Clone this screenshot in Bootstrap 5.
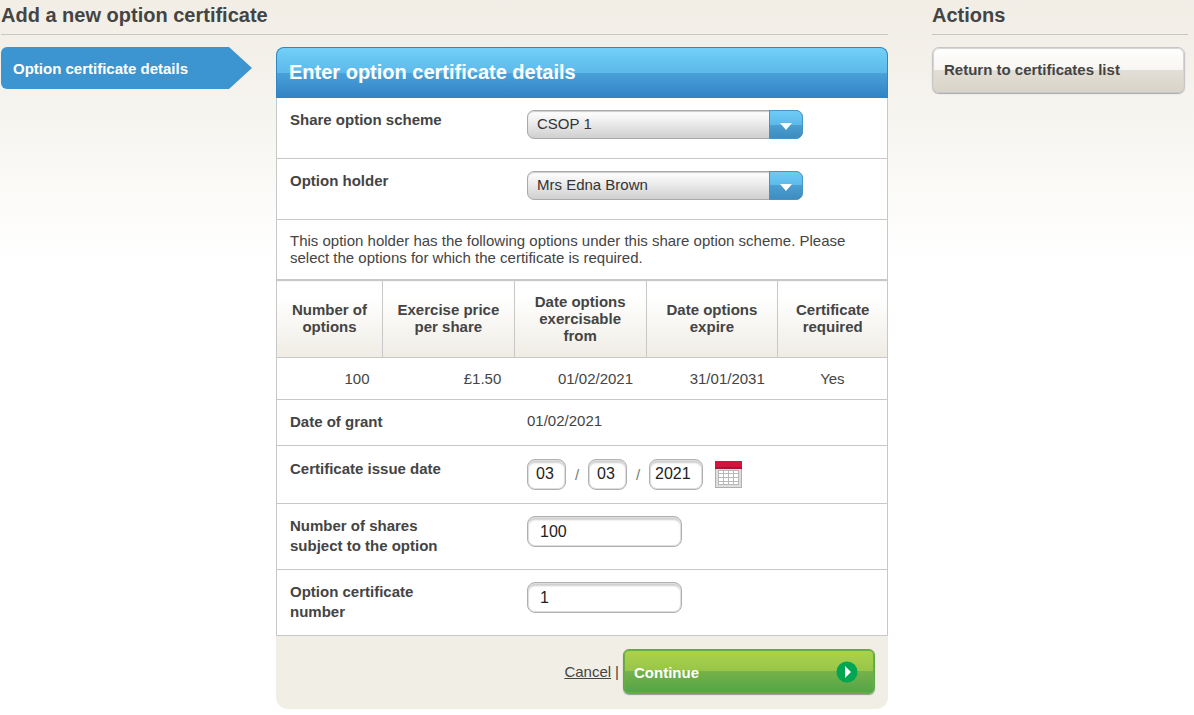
<!DOCTYPE html>
<html lang="en">
<head>
<meta charset="utf-8">
<meta name="viewport" content="width=device-width, initial-scale=1">
<title>Add a new option certificate</title>
<link rel="stylesheet" href="https://cdn.jsdelivr.net/npm/bootstrap@5.3.0/dist/css/bootstrap.min.css">
<style>
  body {
    font-family: "Liberation Sans", Arial, sans-serif;
    font-size: 15px;
    line-height: 17px;
    color: #444;
    background: #fff linear-gradient(#f2eee6, #f3f0e9 50px, #fff 260px) no-repeat;
  }
  .page-title {
    font-size: 20px;
    line-height: 24px;
    font-weight: 700;
    padding: 3px 0 7px;
    margin: 0 0 12px;
    border-bottom: 1px solid #c9c7c0;
  }
  .page-wrap { padding: 0 6px 0 1px; gap: 44px; }
  .steps-col { width: 275px; }
  .actions-col { width: 256px; }
  .step-current {
    width: 251px;
    height: 42px;
    padding: 0 12px;
    background: #3c95d0;
    color: #fff;
    font-weight: 700;
    border-radius: 6px 0 0 6px;
    clip-path: polygon(0 0, 228px 0, 100% 50%, 228px 100%, 0 100%);
  }
  .panel-head {
    height: 51px;
    padding: 0 12px 2px;
    font-size: 20px;
    font-weight: 700;
    color: #fff;
    border: 1px solid #3384c4;
    border-bottom: 0;
    border-radius: 8px 8px 0 0;
    background: linear-gradient(#72d0f8, #5cb9ea 49%, #4aa2da 49%, #3182c3);
  }
  .panel-body { border: solid #c8c8c8; border-width: 0 1px; background: #fff; }
  .form-line { padding: 12px 13px; border-bottom: 1px solid #c8c8c8; }
  .form-line > label, .form-line > .caption {
    width: 237px;
    padding-right: 80px;
    line-height: 20px;
    font-weight: 700;
    flex-shrink: 0;
  }
  .line-select { min-height: 61px; }
  .line-grant { min-height: 46px; }
  .line-date { min-height: 58px; }
  .line-date > label { padding-top: 1px; }
  .line-number { min-height: 66px; }
  .intro { padding: 12px 13px 13px; border-bottom: 1px solid #c8c8c8; }

  .scheme-select {
    width: 276px;
    height: 29px;
    padding: 0 44px 2px 9px;
    font-size: 15px;
    line-height: 17px;
    color: #333;
    border: 1px solid #aaa;
    border-radius: 7px;
    box-shadow: inset 0 1px 1px #ccc;
    background: linear-gradient(#fff, #f0f0f0 35%, #cfcfcf);
  }
  .select-cap {
    right: 0;
    width: 34px;
    height: 29px;
    border: 1px solid #4794c6;
    border-radius: 0 7px 7px 0;
    background: linear-gradient(#6fcbf6, #5db9e8 50%, #4b9fd1 50%, #3e8cc0);
    pointer-events: none;
  }

  .options-table { table-layout: fixed; color: inherit; border-top: 1px solid #c8c8c8; }
  .options-table th {
    height: 77px;
    padding: 0 12px 2px;
    text-align: center;
    vertical-align: middle;
    border-bottom: 1px solid #c8c8c8;
    background: linear-gradient(#fff 20%, #efece4);
  }
  .options-table th + th { border-left: 1px solid #c8c8c8; }
  .options-table td {
    height: 42px;
    padding: 0 13px;
    text-align: right;
    vertical-align: middle;
    border-bottom: 1px solid #c8c8c8;
  }

  .text-field {
    height: 31px;
    font-size: 16px;
    line-height: 18px;
    color: #222;
    border: 1px solid #b0b0b0;
    border-radius: 8px;
    box-shadow: inset 0 0 0 1px #dedede, inset 0 3px 2px #cfcfcf;
    padding: 0 5px 2px;
  }
  .field-day { width: 39px; padding: 0 8px 2px; }
  .field-year { width: 54px; }
  .field-number { width: 155px; padding: 0 12px; }
  .line-date .btn { margin-left: 12px; }
  .date-slash { width: 22px; text-align: center; color: #777; }

  .panel-foot {
    padding: 13px;
    background: #f1eee6;
    border-radius: 0 0 12px 12px;
    min-height: 73px;
  }
  .cancel-link { color: #444; }
  .btn-continue {
    width: 252px;
    height: 45px;
    padding: 0 16px 0 10px;
    font-size: 15px;
    font-weight: 700;
    color: #fff;
    border: 1px solid #5faa48;
    border-radius: 6px;
    box-shadow: inset 0 0 0 1px #69ad47, 0 1px 1px #999;
    background: linear-gradient(#add24a, #97c549 50%, #76b14a 50%, #52a548);
  }
  .btn-continue > span { padding-top: 3px; }
  .btn-continue:hover { color: #fff; }
  .btn-return {
    width: 253px;
    height: 46px;
    padding: 0 11px;
    font-size: 15px;
    font-weight: 700;
    color: #444;
    text-align: left;
    border: 1px solid #c6c6c6;
    border-radius: 7px;
    box-shadow: inset 0 0 0 1px #d6d5d2, 0 1px 1px #aaa;
    background: linear-gradient(#fff, #f7f6f2 50%, #e2dfd6 50%, #d9d4c7);
  }
</style>
</head>
<body>
<div class="page-wrap d-flex align-items-start">
  <main class="flex-grow-1">
    <h1 class="page-title">Add a new option certificate</h1>
    <div class="d-flex align-items-start">
      <nav class="steps-col flex-shrink-0" aria-label="Steps">
        <div class="step-current d-flex align-items-center" aria-current="step">Option certificate details</div>
      </nav>
      <form class="flex-grow-1">
        <h2 class="panel-head d-flex align-items-center m-0">Enter option certificate details</h2>
        <div class="panel-body">
          <div class="form-line line-select d-flex">
            <label for="scheme">Share option scheme</label>
            <div class="position-relative">
              <select id="scheme" class="form-select scheme-select"><option>CSOP 1</option></select>
              <span class="select-cap position-absolute top-0 d-flex align-items-center justify-content-center">
                <svg width="12" height="7" viewBox="0 0 12 7" class="mt-1" aria-hidden="true"><path d="M0 0h12L6 7z" fill="#fff"/></svg>
              </span>
            </div>
          </div>
          <div class="form-line line-select d-flex">
            <label for="holder">Option holder</label>
            <div class="position-relative">
              <select id="holder" class="form-select scheme-select"><option>Mrs Edna Brown</option></select>
              <span class="select-cap position-absolute top-0 d-flex align-items-center justify-content-center">
                <svg width="12" height="7" viewBox="0 0 12 7" class="mt-1" aria-hidden="true"><path d="M0 0h12L6 7z" fill="#fff"/></svg>
              </span>
            </div>
          </div>
          <p class="intro m-0">This option holder has the following options under this share option scheme. Please select the options for which the certificate is required.</p>
          <table class="options-table w-100">
            <colgroup><col style="width:17.3%"><col style="width:21.6%"><col style="width:21.6%"><col style="width:21.6%"><col style="width:17.9%"></colgroup>
            <thead>
              <tr><th scope="col">Number of options</th><th scope="col">Exercise price per share</th><th scope="col">Date options exercisable from</th><th scope="col">Date options expire</th><th scope="col">Certificate required</th></tr>
            </thead>
            <tbody>
              <tr><td>100</td><td>£1.50</td><td>01/02/2021</td><td>31/01/2031</td><td class="text-center">Yes</td></tr>
            </tbody>
          </table>
          <div class="form-line line-grant d-flex">
            <span class="caption">Date of grant</span>
            <span>01/02/2021</span>
          </div>
          <div class="form-line line-date d-flex">
            <label for="day" class="pe-0">Certificate issue date</label>
            <div class="d-flex align-items-center">
              <input id="day" class="form-control text-field field-day" type="text" value="03">
              <span class="date-slash">/</span>
              <input class="form-control text-field field-day" type="text" value="03" aria-label="Month">
              <span class="date-slash">/</span>
              <input class="form-control text-field field-year" type="text" value="2021" aria-label="Year">
              <button type="button" class="btn border-0 p-0 lh-1" aria-label="Choose date">
                <svg class="d-block" width="27" height="27" viewBox="0 0 27 27" aria-hidden="true">
                  <path d="M0 7h27v20H0z" fill="#b0b0b0"/>
                  <path d="M1 7h25v19H1z" fill="#dedede"/>
                  <path d="M0 0h27v7H0z" fill="#d3143c"/>
                  <path d="M0 6h27v2H0z" fill="#a51834"/>
                  <path d="M3 9h21v15H3z" fill="#b8b8b8"/>
                  <g fill="#fff">
                    <path d="M4 10h4v2H4zM9 10h4v2H9zM14 10h4v2h-4zM19 10h4v2h-4z"/>
                    <path d="M4 13h4v3H4zM9 13h4v3H9zM14 13h4v3h-4zM19 13h4v3h-4z"/>
                    <path d="M4 17h4v3H4zM9 17h4v3H9zM14 17h4v3h-4zM19 17h4v3h-4z"/>
                    <path d="M4 21h4v2H4zM9 21h4v2H9zM14 21h4v2h-4zM19 21h4v2h-4z"/>
                  </g>
                </svg>
              </button>
            </div>
          </div>
          <div class="form-line line-number d-flex">
            <label for="shares">Number of shares subject to the option</label>
            <input id="shares" class="form-control text-field field-number" type="text" value="100">
          </div>
          <div class="form-line line-number d-flex">
            <label for="certno">Option certificate number</label>
            <input id="certno" class="form-control text-field field-number" type="text" value="1">
          </div>
        </div>
        <div class="panel-foot d-flex align-items-start justify-content-end">
          <div class="d-flex align-items-center">
            <a href="#" class="cancel-link">Cancel</a><span class="px-1">|</span>
            <button type="submit" class="btn btn-continue d-flex align-items-center justify-content-between">
              <span>Continue</span>
              <svg width="22" height="22" viewBox="0 0 22 22" aria-hidden="true"><circle cx="11" cy="11" r="10.5" fill="#00a651"/><path d="M9 5l6 6-6 6z" fill="#fff"/></svg>
            </button>
          </div>
        </div>
      </form>
    </div>
  </main>
  <aside class="actions-col flex-shrink-0">
    <h2 class="page-title">Actions</h2>
    <button type="button" class="btn btn-return">Return to certificates list</button>
  </aside>
</div>
<script src="https://cdn.jsdelivr.net/npm/bootstrap@5.3.0/dist/js/bootstrap.bundle.min.js"></script>
</body>
</html>
